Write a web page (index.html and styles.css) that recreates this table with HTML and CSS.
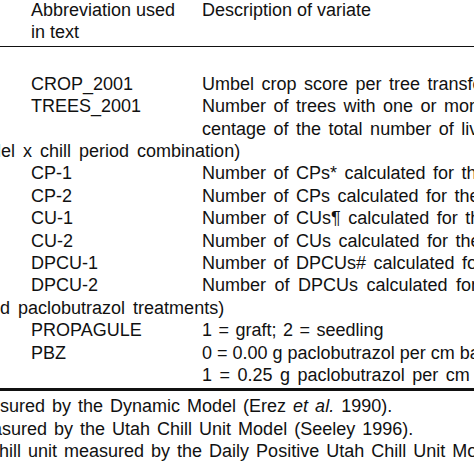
FILE: index.html
```html
<!DOCTYPE html>
<html>
<head>
<meta charset="utf-8">
<link rel="stylesheet" href="styles.css">
</head>
<body>
<div class="sheet">
  <div class="row head">
    <div class="abbr">Abbreviation used<br>in text</div>
    <div class="desc">Description of variate</div>
  </div>
  <div class="rule thin"></div>
  <div class="row blank"><div class="abbr">&nbsp;</div></div>
  <div class="row"><div class="abbr">CROP_2001</div><div class="desc wide">Umbel crop score per tree transformed</div></div>
  <div class="row"><div class="abbr">TREES_2001</div><div class="desc wide">Number of trees with one or more umbels as a per-<br>centage of the total number of live trees</div></div>
  <div class="span cut1">Chill model x chill period combination)</div>
  <div class="row"><div class="abbr">CP-1</div><div class="desc wide">Number of CPs* calculated for the first period</div></div>
  <div class="row"><div class="abbr">CP-2</div><div class="desc wide">Number of CPs calculated for the second period</div></div>
  <div class="row"><div class="abbr">CU-1</div><div class="desc wide">Number of CUs¶ calculated for the first period</div></div>
  <div class="row"><div class="abbr">CU-2</div><div class="desc wide">Number of CUs calculated for the second period</div></div>
  <div class="row"><div class="abbr">DPCU-1</div><div class="desc wide">Number of DPCUs# calculated for the first period</div></div>
  <div class="row"><div class="abbr">DPCU-2</div><div class="desc wider">Number of DPCUs calculated for the second period</div></div>
  <div class="span cut2">and paclobutrazol treatments)</div>
  <div class="row"><div class="abbr">PROPAGULE</div><div class="desc mid">1 = graft; 2 = seedling</div></div>
  <div class="row"><div class="abbr">PBZ</div><div class="desc"><span class="tight">0 = 0.00 g paclobutrazol per cm basal area</span><br><span class="wide">1 = 0.25 g paclobutrazol per cm basal area</span></div></div>
  <div class="rule thick"></div>
  <div class="notes">
    <p class="note n1">sured by the Dynamic Model (Erez <i>et al.</i> 1990).</p>
    <p class="note n2">asured by the Utah Chill Unit Model (Seeley 1996).</p>
    <p class="note n3">chill unit measured by the Daily Positive Utah Chill Unit Model</p>
  </div>
</div>
</body>
</html>
```
FILE: styles.css
```css
html, body {
  margin: 0;
  padding: 0;
  background: #ffffff;
  overflow: hidden;
}
body {
  width: 474px;
  height: 474px;
  font-family: "Liberation Sans", Arial, sans-serif;
  font-size: 18px;
  line-height: 22.4px;
  color: #111111;
}
.sheet {
  margin-top: -1px;
  white-space: nowrap;
}
.row {
  display: grid;
  grid-template-columns: 202px 1fr;
}
.abbr {
  padding-left: 31px;
}
.wide {
  word-spacing: 2.5px;
}
.wider {
  word-spacing: 3.5px;
}
.mid {
  word-spacing: 1.5px;
}
.tight {
  word-spacing: 0;
}
.rule {
  background: #111111;
  width: 474px;
}
.rule.thin {
  height: 1.5px;
  margin-top: 2px;
}
.rule.thick {
  height: 3px;
  margin-top: 2px;
}
.row.blank {
  margin-top: 3px;
}
.span {
  word-spacing: 3px;
}
.cut1 {
  text-indent: -77px;
}
.cut2 {
  text-indent: -20px;
}
.notes {
  margin-top: 4px;
}
.note {
  margin: 0;
  word-spacing: 2px;
}
.n1 { text-indent: 0; }
.n2 { text-indent: -8px; }
.n3 { text-indent: -10px; }
```
